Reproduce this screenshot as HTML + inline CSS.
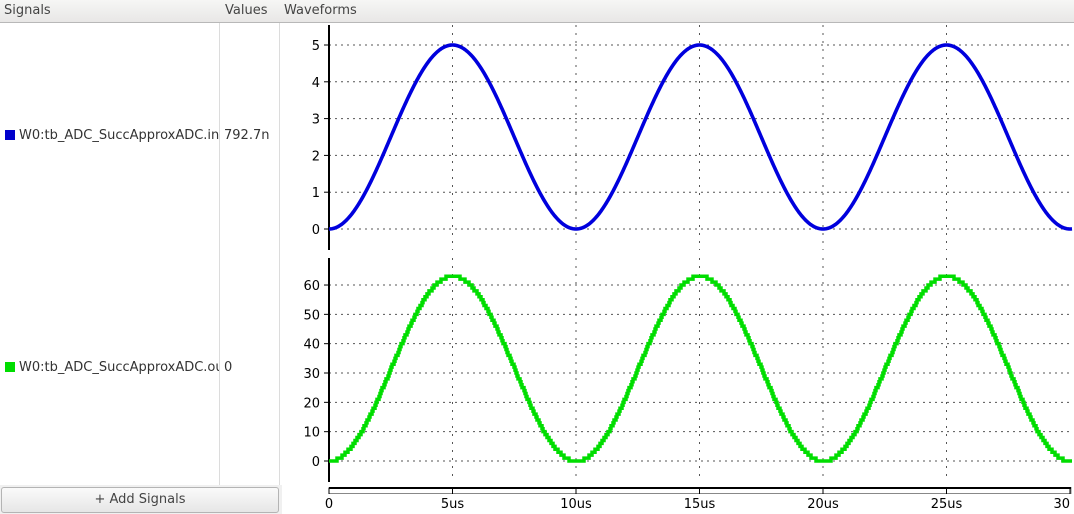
<!DOCTYPE html>
<html><head><meta charset="utf-8"><style>
body{margin:0;width:1074px;height:514px;overflow:hidden;background:#fff;font-family:"DejaVu Sans","Liberation Sans",sans-serif;font-size:13px;color:#333;position:relative}
.hdr{position:absolute;top:0;left:0;width:1074px;height:22px;background:linear-gradient(#f6f6f5,#e8e7e6);border-bottom:1px solid #b8b8b8}
.hdr span{position:absolute;top:3px;color:#444}
.vl{position:absolute;top:23px;width:1px;height:462px;background:#dcdcdc}
.sig{position:absolute;left:5px;white-space:nowrap;width:214px;overflow:hidden}
.sq{display:inline-block;width:10px;height:10px;margin-right:4px;vertical-align:-1px}
.val{position:absolute;left:224px}
.btn{position:absolute;left:1px;top:487px;width:276px;height:24px;border:1px solid #b4b4b4;border-radius:3px;background:linear-gradient(#fafafa,#e6e6e6);text-align:center;line-height:24px;color:#444}
.foot{position:absolute;left:0;top:485px;width:282px;height:29px;background:#f0f0f0}
svg{position:absolute;left:0;top:0}
</style></head><body>
<div class="hdr"><span style="left:4px">Signals</span><span style="left:225px">Values</span><span style="left:284px">Waveforms</span></div>
<div class="vl" style="left:219px"></div><div class="vl" style="left:279px"></div>
<div class="sig" style="top:128px"><span class="sq" style="background:#0000cc"></span>W0:tb_ADC_SuccApproxADC.in</div>
<div class="val" style="top:128px">792.7n</div>
<div class="sig" style="top:360px"><span class="sq" style="background:#00dd00"></span>W0:tb_ADC_SuccApproxADC.out</div>
<div class="val" style="top:360px">0</div>
<div class="foot"></div>
<div class="btn">+ Add Signals</div>
<svg id="s" width="1074" height="514" font-family="DejaVu Sans, Liberation Sans, sans-serif" font-size="13"></svg>
<script>
var s=document.getElementById('s'),h='';
var X0=329,PX=24.7;
function gx(t){return X0+t*PX}
var xs=[5,10,15,20,25];
for(var i=0;i<xs.length;i++){var x=gx(xs[i]).toFixed(1);
h+='<line x1="'+x+'" y1="25" x2="'+x+'" y2="250" stroke="#555" stroke-dasharray="2,6" stroke-width="1"/>';
h+='<line x1="'+x+'" y1="258" x2="'+x+'" y2="482" stroke="#555" stroke-dasharray="2,6" stroke-width="1"/>';}
for(var v=0;v<=5;v++){var y=229-v*36.8;
h+='<line x1="329" y1="'+y+'" x2="1072" y2="'+y+'" stroke="#555" stroke-dasharray="2,4"/>';
h+='<line x1="324" y1="'+y+'" x2="329" y2="'+y+'" stroke="#000"/>';
h+='<text x="320" y="'+(y+5)+'" text-anchor="end" fill="#000">'+v+'</text>';}
for(var v=0;v<=60;v+=10){var y=461-v*2.933;
h+='<line x1="329" y1="'+y+'" x2="1072" y2="'+y+'" stroke="#555" stroke-dasharray="2,4"/>';
h+='<line x1="324" y1="'+y+'" x2="329" y2="'+y+'" stroke="#000"/>';
h+='<text x="320" y="'+(y+5)+'" text-anchor="end" fill="#000">'+v+'</text>';}
h+='<line x1="329" y1="25" x2="329" y2="250" stroke="#000" stroke-width="2"/>';
h+='<line x1="329" y1="258" x2="329" y2="482" stroke="#000" stroke-width="2"/>';
h+='<rect x="329" y="487.5" width="742" height="6" fill="#fff" stroke="#888" stroke-width="1"/>';
h+='<line x1="329" y1="488" x2="1071" y2="488" stroke="#000" stroke-width="2"/>';
var lab=['0','5us','10us','15us','20us','25us','30'];
for(var i=0;i<=6;i++){var x=gx(i*5);
h+='<line x1="'+x+'" y1="488" x2="'+x+'" y2="494" stroke="#000"/>';
h+='<text x="'+(i==6?1070:x)+'" y="508" text-anchor="'+(i==6?'end':'middle')+'" fill="#000">'+lab[i]+'</text>';}
var p='';for(var x=329;x<=1072;x+=1){var t=(x-X0)/PX;var v=2.5-2.5*Math.cos(2*Math.PI*t/10);p+=(p?'L':'M')+x+' '+(229-v*36.8).toFixed(2);}
h+='<path d="'+p+'" fill="none" stroke="#0000dd" stroke-width="3.6"/>';
p='';var prev=null;for(var x=329;x<=1072;x+=1){var t=(x-X0)/PX;var v=Math.round(63*(0.5-0.5*Math.cos(2*Math.PI*t/10)));var y=(461-v*2.933).toFixed(2);
if(prev===null)p='M'+x+' '+y;else{if(prev!=y)p+='L'+x+' '+prev+'L'+x+' '+y;}prev=y;}
p+='L1072 '+prev;
h+='<path d="'+p+'" fill="none" stroke="#00dd00" stroke-width="3.5"/>';
s.innerHTML=h;
</script>
</body></html>
